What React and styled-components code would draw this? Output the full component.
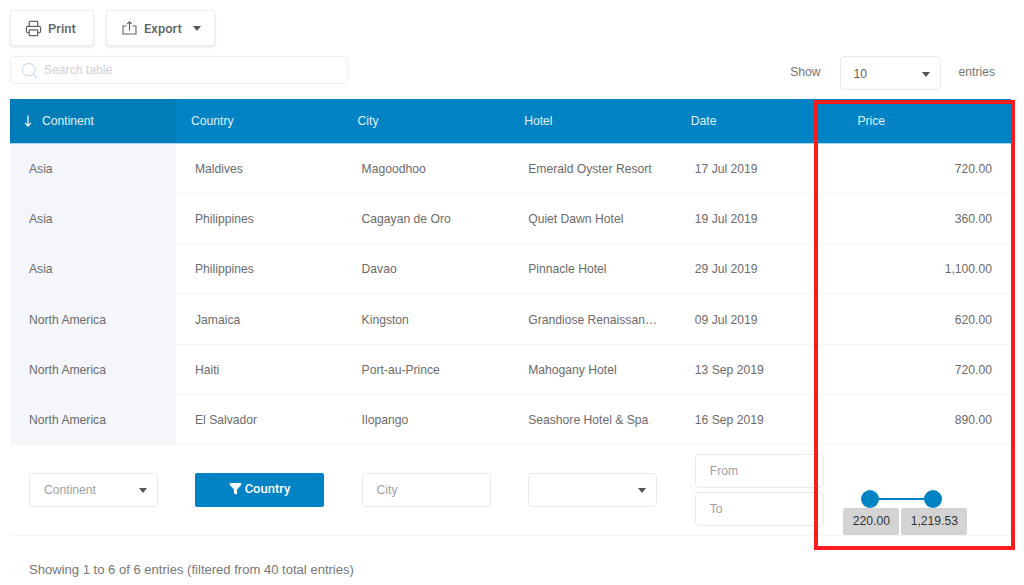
import React from "react";
import styled, { createGlobalStyle } from "styled-components";
import { Printer, Search, Filter } from "lucide-react";

const Global = createGlobalStyle`
  html, body { margin: 0; padding: 0; background: #fff; }
  body { font-family: "Liberation Sans", Arial, sans-serif; color: #6b6b6b; overflow: hidden; }
  * { box-sizing: border-box; }
`;

const Page = styled.div`
  position: relative;
  width: 1024px;
  height: 585px;
  padding: 10px 13px 0 10px;
  overflow: hidden;
`;
const Toolbar = styled.div`
  display: flex;
  gap: 12px;
  height: 36px;
`;
const ToolButton = styled.div`
  display: flex;
  align-items: center;
  gap: ${p => p.$gap}px;
  height: 36px;
  width: ${p => p.$w}px;
  padding-left: ${p => p.$pad}px;
  background: #fff;
  border: 1px solid #f0f0f3;
  border-radius: 3px;
  box-shadow: 0 1px 3px rgba(0,0,0,.12);
  font-family: "Roboto", "Liberation Sans", sans-serif;
  font-size: 13px;
  font-weight: 500;
  color: #5f6368;
`;
const Caret = styled.span`
  display: inline-block;
  width: 0;
  height: 0;
  border-left: 4.5px solid transparent;
  border-right: 4.5px solid transparent;
  border-top: 5px solid #555;
  margin-left: ${p => p.$ml || 0}px;
`;
const SearchRow = styled.div`
  display: flex;
  align-items: flex-start;
  height: 34px;
  margin-top: 10px;
  margin-bottom: 9px;
`;
const SearchBox = styled.div`
  display: flex;
  align-items: center;
  gap: 5px;
  width: 338px;
  height: 28px;
  padding-left: 9px;
  border: 1px solid #eff0f5;
  border-radius: 4px;
  font-size: 12.15px;
  color: #cfd2d8;
`;
const Show = styled.div`
  display: flex;
  align-items: center;
  margin-left: auto;
  padding-right: 16px;
  font-size: 12.15px;
  color: #757575;
`;
const ShowLabel = styled.span`
  position: relative;
  top: -1px;
`;
const ShowSelect = styled.div`
  display: flex;
  align-items: center;
  justify-content: space-between;
  width: 101px;
  height: 34px;
  margin: 0 18px 0 19px;
  padding: 2px 10px 0 13px;
  border: 1px solid #e9eaf1;
  border-radius: 4px;
  color: #5f5f5f;
`;
const Table = styled.div`
  display: grid;
  grid-template-columns: 166px repeat(4, 166.6px) minmax(0, 1fr);
  width: 1001px;
`;
const Head = styled.div`
  display: flex;
  align-items: center;
  gap: 10px;
  height: 44.5px;
  padding: 1px 0 0 ${p => p.$pl || 15}px;
  background: ${p => (p.$sorted ? "#007db8" : "#0083c4")};
  border-bottom: 1px solid #a5d5ec;
  color: #e3f1f8;
  font-size: 12.15px;
`;
const Cell = styled.div`
  display: flex;
  align-items: center;
  justify-content: ${p => (p.$right ? "flex-end" : "flex-start")};
  height: 50.33px;
  padding: 1px 19px 0;
  background: ${p => (p.$sorted ? "#f4f6fa" : "#fff")};
  border-bottom: 1px solid #f5f6f9;
  font-size: 12.15px;
  color: #6b6b6b;
  white-space: nowrap;
`;
const FilterCell = styled.div`
  display: flex;
  flex-direction: column;
  justify-content: center;
  gap: 4px;
  height: 90.5px;
  padding: 0 19px;
  border-bottom: 1px solid #f5f5f8;
  &:first-child { border-left: 1px solid #f5f5f8; }
`;
const Field = styled.div`
  display: flex;
  align-items: center;
  justify-content: space-between;
  flex: none;
  width: 129px;
  height: 34px;
  padding: 0 10px 0 14px;
  background: #fff;
  border: 1px solid #e9eaf1;
  border-radius: 4px;
  font-size: 12.15px;
  color: #a0a0a0;
`;
const FilterButton = styled.div`
  display: flex;
  align-items: center;
  justify-content: center;
  gap: 3px;
  width: 129px;
  height: 34px;
  padding-bottom: 4px;
  background: #0083c4;
  border-radius: 2px;
  font-family: "Roboto", "Liberation Sans", sans-serif;
  font-size: 13px;
  font-weight: 500;
  color: #fff;
`;
const SliderCell = styled.div`
  display: flex;
  flex-direction: column;
  height: 90.5px;
  padding: 44px 0 0 0;
  border-bottom: 1px solid #f5f5f8;
  border-right: 1px solid #f5f5f8;
`;
const Track = styled.div`
  position: relative;
  height: 1px;
  width: 134px;
  margin: 10px 0 0 0;
  background: #f2f2f2;
`;
const Range = styled.div`
  position: absolute;
  left: 28px;
  width: 63px;
  top: -1px;
  height: 2px;
  background: #0083c4;
`;
const Thumb = styled.div`
  position: absolute;
  left: ${p => p.$left}px;
  top: -9px;
  width: 18px;
  height: 18px;
  border-radius: 50%;
  background: #0083c4;
`;
const Values = styled.div`
  display: flex;
  gap: 2px;
  margin: 8.5px 0 0 1px;
`;
const Value = styled.div`
  display: flex;
  align-items: center;
  justify-content: center;
  width: ${p => p.$w}px;
  height: 27px;
  background: #d3d3d3;
  border-radius: 2px;
  font-size: 12.15px;
  color: #333;
`;
const Info = styled.div`
  margin: 26.5px 0 0 19px;
  font-size: 13.05px;
  color: #777;
`;
const Highlight = styled.div`
  position: absolute;
  left: 814px;
  top: 100px;
  width: 201px;
  height: 449.5px;
  border: 4px solid #fb1c20;
  pointer-events: none;
`;

const ExportIcon = () => (
  <svg width="15" height="14" viewBox="0 0 15 14" fill="none" stroke="#5f6368" strokeWidth="1.1">
    <path d="M4.5 5H1v8h13V5h-3.5" />
    <path d="M7.5 9.5V1M5 3.2 7.5 .8 10 3.2" />
  </svg>
);
const SortIcon = () => (
  <svg width="8" height="12" viewBox="0 0 8 12" fill="none" stroke="#fff" strokeWidth="1.2">
    <path d="M4 .5V11M1 7.8 4 11l3-3.2" />
  </svg>
);

const rows = [
  ["Asia", "Maldives", "Magoodhoo", "Emerald Oyster Resort", "17 Jul 2019", "720.00"],
  ["Asia", "Philippines", "Cagayan de Oro", "Quiet Dawn Hotel", "19 Jul 2019", "360.00"],
  ["Asia", "Philippines", "Davao", "Pinnacle Hotel", "29 Jul 2019", "1,100.00"],
  ["North America", "Jamaica", "Kingston", "Grandiose Renaissan…", "09 Jul 2019", "620.00"],
  ["North America", "Haiti", "Port-au-Prince", "Mahogany Hotel", "13 Sep 2019", "720.00"],
  ["North America", "El Salvador", "Ilopango", "Seashore Hotel & Spa", "16 Sep 2019", "890.00"],
];

export default function App() {
  return (
    <Page>
      <Global />
      <Toolbar>
        <ToolButton $w={84} $pad={14} $gap={6}><Printer size={17} strokeWidth={1.7} />Print</ToolButton>
        <ToolButton $w={109} $pad={15} $gap={7}><ExportIcon />Export<Caret $ml={4} /></ToolButton>
      </Toolbar>
      <SearchRow>
        <SearchBox><Search size={19} strokeWidth={1.4} color="#d0dbe6" />Search table</SearchBox>
        <Show><ShowLabel>Show</ShowLabel><ShowSelect>10<Caret /></ShowSelect><ShowLabel>entries</ShowLabel></Show>
      </SearchRow>
      <Table>
        <Head $sorted $pl={14}><SortIcon />Continent</Head>
        <Head>Country</Head>
        <Head>City</Head>
        <Head>Hotel</Head>
        <Head>Date</Head>
        <Head>Price</Head>
        {rows.map(r => r.map((c, i) => (
          <Cell key={r[1] + r[2] + i} $sorted={i === 0} $right={i === 5}>{c}</Cell>
        )))}
        <FilterCell><Field>Continent<Caret /></Field></FilterCell>
        <FilterCell><FilterButton><Filter size={13} fill="#fff" strokeWidth={2} />Country</FilterButton></FilterCell>
        <FilterCell><Field>City</Field></FilterCell>
        <FilterCell><Field><span /><Caret /></Field></FilterCell>
        <FilterCell><Field>From</Field><Field>To</Field></FilterCell>
        <SliderCell>
          <Track>
            <Range />
            <Thumb $left={19} />
            <Thumb $left={82} />
          </Track>
          <Values><Value $w={56}>220.00</Value><Value $w={66}>1,219.53</Value></Values>
        </SliderCell>
      </Table>
      <Info>Showing 1 to 6 of 6 entries (filtered from 40 total entries)</Info>
      <Highlight />
    </Page>
  );
}
